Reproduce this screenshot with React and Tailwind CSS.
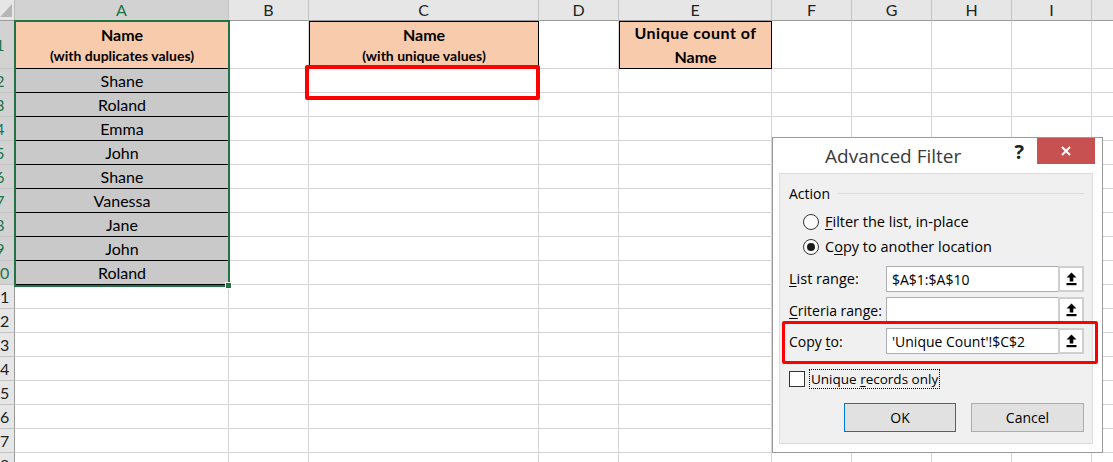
import React from "react";

const COLS = ["A", "B", "C", "D", "E", "F", "G", "H", "I", "J"];
const NAMES = ["Shane", "Roland", "Emma", "John", "Shane", "Vanessa", "Jane", "John", "Roland"];
const ROWS = Array.from({ length: 18 }, (_, i) => i + 1);

const UploadIcon = () => (
  <svg width="11" height="14" viewBox="0 0 11 14">
    <path d="M5.5 0.5 L10.5 5.5 H7.3 V9.5 H3.7 V5.5 H0.5 Z" fill="#000" />
    <rect x="0.5" y="11" width="10" height="2.2" fill="#000" />
  </svg>
);

const RangeInput = ({ value }) => (
  <div className="flex-1 flex h-[26px] border border-[#abadb3] bg-white">
    <div className="flex-1 flex items-center pl-[5px] text-[14px] text-black">{value}</div>
    <div className="w-[26px] -my-px -mr-px border-2 border-[#cfcfcf] bg-white flex items-center justify-center">
      <UploadIcon />
    </div>
  </div>
);

const Radio = ({ checked, children }) => (
  <div className="flex items-center h-[25px] ml-[14px]">
    <div className="w-[16px] h-[16px] rounded-full border border-[#333] bg-white flex items-center justify-center">
      {checked && <div className="w-[8px] h-[8px] rounded-full bg-[#1a1a1a]" />}
    </div>
    <span className="ml-[6px] text-[14.5px] text-black">{children}</span>
  </div>
);

function AdvancedFilter() {
  return (
    <div className="absolute left-[772px] top-[137px] w-[331px] h-[316px] bg-white border border-[#9a9a9a] font-['Open_Sans',sans-serif]">
      {/* title bar */}
      <div className="h-[35px] flex items-start">
        <div className="ml-[52px] mt-[6px] text-[19px] text-[#3a3a3a] leading-[24px]">Advanced Filter</div>
        <div className="ml-auto mt-[2px] mr-[13px] text-[20px] font-bold text-[#222] leading-[24px]">?</div>
        <div className="mr-[7px] w-[58px] h-[26px] bg-[#c75050] flex items-center justify-center">
          <svg width="10" height="10" viewBox="0 0 10 10">
            <path d="M1 1 L9 9 M9 1 L1 9" stroke="#fff" strokeWidth="2" />
          </svg>
        </div>
      </div>

      {/* panel */}
      <div className="ml-[6px] mr-[9px] h-[271px] bg-[#f0f0f0] border border-[#dcdcdc] pl-[9px] pr-[8px]">
        <div className="flex items-center mt-[9px] h-[20px]">
          <span className="text-[14px] text-black">Action</span>
          <div className="flex-1 h-px bg-[#dcdcdc] ml-[8px]" />
        </div>
        <div className="mt-[6px]">
          <Radio>
            <span className="underline underline-offset-2">F</span>ilter the list, in-place
          </Radio>
          <Radio checked>
            C<span className="underline underline-offset-2">o</span>py to another location
          </Radio>
        </div>

        <div className="mt-[7px] flex flex-col gap-[5px]">
          <div className="flex items-center">
            <div className="w-[97px] text-[14.5px] text-black">
              <span className="underline underline-offset-2">L</span>ist range:
            </div>
            <RangeInput value="$A$1:$A$10" />
          </div>
          <div className="flex items-center">
            <div className="w-[97px] text-[14px] text-black">
              <span className="underline underline-offset-2">C</span>riteria range:
            </div>
            <RangeInput value="" />
          </div>
          <div className="flex items-center">
            <div className="w-[97px] text-[14px] text-black">
              Copy <span className="underline underline-offset-2">t</span>o:
            </div>
            <RangeInput value="'Unique Count'!$C$2" />
          </div>
        </div>

        <div className="mt-[15px] flex items-center h-[20px]">
          <div className="w-[16px] h-[16px] border border-[#333] bg-white" />
          <span className="ml-[4px] px-[1px] border border-dotted border-black text-[13.5px] text-black leading-[18px]">
            Unique <span className="underline underline-offset-2">r</span>ecords only
          </span>
        </div>

        <div className="mt-[14px] flex justify-end gap-[15px]">
          <button className="w-[112px] h-[29px] bg-[#e1e1e1] border border-[#0078d7] text-[14px] text-black">OK</button>
          <button className="w-[113px] h-[29px] bg-[#e1e1e1] border border-[#adadad] text-[14px] text-black">Cancel</button>
        </div>
      </div>

      {/* highlight around Copy to */}
      <div className="absolute left-[9px] right-[4px] top-[183px] h-[43px] border-[3px] border-[#ff0000] rounded-[2px]" />
    </div>
  );
}

function renderCell(row, col) {
  const base = "border-r border-b border-[#d4d4d4] overflow-hidden";
  if (row === 1 && col === "A") {
    return (
      <div key={col} className="bg-[#f8cbad] border-b border-black flex flex-col items-center justify-center font-bold text-black">
        <div className="text-[16px] leading-[22px]">Name</div>
        <div className="text-[14px] leading-[20px]">(with duplicates values)</div>
      </div>
    );
  }
  if (row === 1 && col === "C") {
    return (
      <div key={col} className="bg-[#f8cbad] border border-black flex flex-col items-center justify-center font-bold text-black">
        <div className="text-[16px] leading-[22px]">Name</div>
        <div className="text-[14px] leading-[20px]">(with unique values)</div>
      </div>
    );
  }
  if (row === 1 && col === "E") {
    return (
      <div key={col} className="bg-[#f8cbad] border border-black flex flex-col items-center justify-center font-bold text-black text-[16px] leading-[24px]">
        <div className="tracking-[0.5px]">Unique count of</div>
        <div>Name</div>
      </div>
    );
  }
  if (col === "A" && row >= 2 && row <= 10) {
    return (
      <div key={col} className="bg-[#c9c9c9] border-b border-black flex items-center justify-center text-[16px] text-black">
        {NAMES[row - 2]}
      </div>
    );
  }
  return <div key={col} className={base} />;
}

export default function App() {
  return (
    <div className="relative w-[1113px] h-[462px] overflow-hidden bg-white font-['Lato',sans-serif]">
      <div className="grid grid-cols-[15px_214px_80px_230px_80px_153px_80px_80px_80px_80px_80px] grid-rows-[21px_48px_repeat(17,24px)]">
        {/* column header row */}
        <div className="bg-[#e6e6e6] border-r border-b border-r-[#bdbdbd] border-b-[#9b9b9b] relative">
          <svg className="absolute left-[0px] top-[4px]" width="12" height="13" viewBox="0 0 12 13">
            <path d="M12 0 L12 13 L0 13 Z" fill="#b6b6b6" />
          </svg>
        </div>
        {COLS.map((c) => (
          <div
            key={c}
            className={`flex items-center justify-center text-[16px] border-r border-b border-r-[#c4c4c4] border-b-[#9b9b9b] ${
              c === "A" ? "bg-[#d2d2d2] text-[#217346]" : "bg-[#e6e6e6] text-[#222]"
            }`}
          >
            {c}
          </div>
        ))}

        {ROWS.map((r) => (
          <React.Fragment key={r}>
            <div
              className={`overflow-hidden border-r border-b border-r-[#9b9b9b] border-b-[#c4c4c4] flex items-center ${
                r <= 10 ? "bg-[#d2d2d2] text-[#217346]" : "bg-[#e6e6e6] text-[#222]"
              }`}
            >
              <div className="w-[30px] shrink-0 -ml-[15px] text-center text-[16px]">{r}</div>
            </div>
            {COLS.map((c) => renderCell(r, c))}
          </React.Fragment>
        ))}
      </div>

      {/* selection A1:A10 */}
      <div className="absolute left-[14px] top-[20px] w-[216px] h-[267px] border-2 border-[#217346]" />
      <div className="absolute left-[225px] top-[282px] w-[7px] h-[7px] bg-[#217346] border border-white" />

      {/* red highlight on C2 */}
      <div className="absolute left-[305px] top-[65px] w-[235px] h-[35px] border-4 border-[#ff0000] rounded-[2px]" />

      <AdvancedFilter />
    </div>
  );
}
